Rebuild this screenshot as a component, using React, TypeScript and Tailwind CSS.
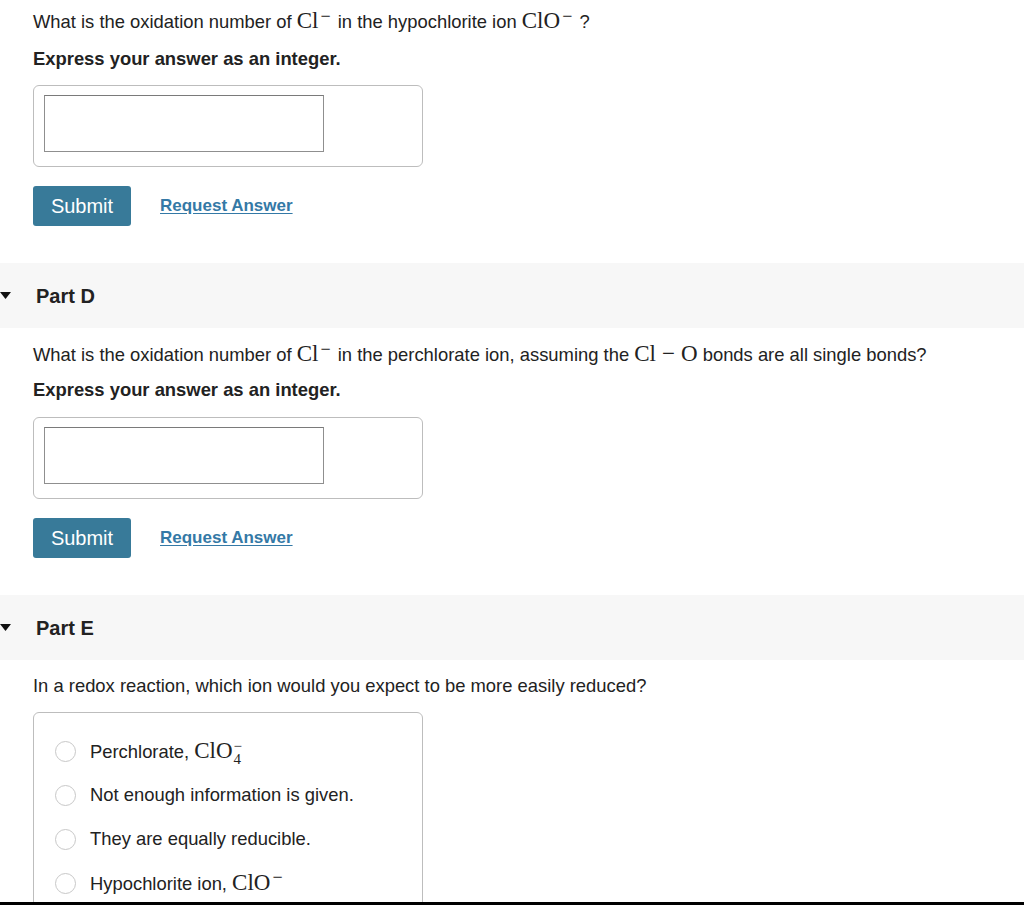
import React from "react";

const sans = { fontFamily: '"Liberation Sans", Arial, sans-serif' };

function M({ children }: { children: React.ReactNode }) {
  return (
    <span className="text-[23px] text-[#222]" style={{ fontFamily: '"Liberation Serif", "Times New Roman", serif' }}>
      {children}
    </span>
  );
}

function Minus() {
  return <span className="inline-block align-top text-[18px] leading-[18px] relative top-[-2px] ml-[2px] mr-[2px]">−</span>;
}

function AnswerBox() {
  return (
    <div className="mt-[15px] w-[390px] h-[82px] rounded-[6px] border border-[#bdbdbd] pt-[9px] pl-[10px]">
      <div className="w-[280px] h-[57px] border border-[#8f8f8f] border-t-[#7a7a7a] bg-white" />
    </div>
  );
}

function Buttons() {
  return (
    <div className="mt-[19px] flex items-center gap-[29px]">
      <button className="w-[98px] h-[40px] rounded-[3px] bg-[#387a99] text-white text-[20px]">Submit</button>
      <a className="text-[17px] font-bold text-[#3479a6] underline underline-offset-[2px]">Request Answer</a>
    </div>
  );
}

function Band({ label }: { label: string }) {
  return (
    <div className="mt-[37px] h-[65px] bg-[#f7f7f7] flex items-center">
      <svg width="11" height="7" viewBox="0 0 11 7">
        <polygon points="0,0 11,0 5.5,7" fill="#111" />
      </svg>
      <span className="ml-[25px] text-[20px] font-bold text-[#222]">{label}</span>
    </div>
  );
}

function Radio({ children }: { children: React.ReactNode }) {
  return (
    <div className="flex items-center h-[44px]">
      <div className="ml-[21px] w-[21px] h-[21px] rounded-full border border-[#c8c8c8] bg-white shrink-0" />
      <div className="ml-[14px] h-[26px] leading-[26px] text-[18.4px] text-[#222] whitespace-nowrap">{children}</div>
    </div>
  );
}

export default function App() {
  return (
    <div className="w-[1024px] h-[905px] bg-white flex flex-col overflow-hidden text-[#222]" style={sans}>
      <div className="flex-1 overflow-hidden">
        <div className="px-[33px] pt-[9px]">
          <p className="h-[24px] leading-[24px] text-[18.4px] whitespace-nowrap">
            What is the oxidation number of <M>Cl<Minus /></M> in the hypochlorite ion <M>ClO<Minus /></M> ?
          </p>
          <p className="mt-[14px] h-[24px] leading-[24px] text-[18.4px] font-bold">Express your answer as an integer.</p>
          <div className="-mt-[1px]"><AnswerBox /></div>
          <Buttons />
        </div>
        <Band label="Part D" />
        <div className="px-[33px] pt-[14px]">
          <p className="h-[24px] leading-[24px] text-[18.4px] whitespace-nowrap">
            What is the oxidation number of <M>Cl<Minus /></M> in the perchlorate ion, assuming the <M>Cl<span className="mx-[6px]">−</span>O</M> bonds are all single bonds?
          </p>
          <p className="mt-[12px] h-[24px] leading-[24px] text-[18.4px] font-bold">Express your answer as an integer.</p>
          <AnswerBox />
          <Buttons />
        </div>
        <Band label="Part E" />
        <div className="px-[33px] pt-[14px]">
          <p className="h-[24px] leading-[24px] text-[18.4px] whitespace-nowrap">In a redox reaction, which ion would you expect to be more easily reduced?</p>
          <div className="mt-[14px] w-[390px] h-[220px] rounded-t-[6px] border border-[#bdbdbd] pt-[16px]">
            <Radio>
              Perchlorate, <M>ClO<span className="inline-flex flex-col align-middle text-[15px] leading-[13px] relative top-[0px] ml-[1px]"><span>−</span><span>4</span></span></M>
            </Radio>
            <Radio>Not enough information is given.</Radio>
            <Radio>They are equally reducible.</Radio>
            <Radio>
              Hypochlorite ion, <M>ClO<Minus /></M>
            </Radio>
          </div>
        </div>
      </div>
      <div className="h-[3px] bg-black shrink-0" />
    </div>
  );
}
